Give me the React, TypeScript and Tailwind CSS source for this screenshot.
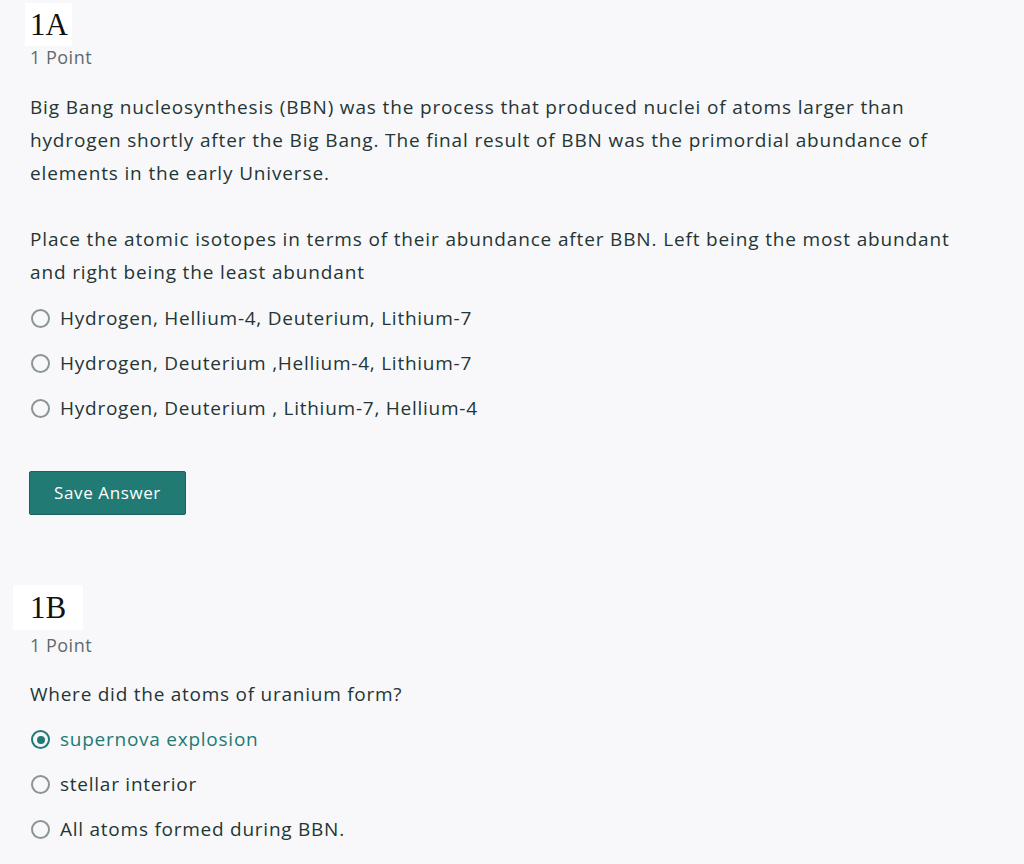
import React from 'react'

type Opt = { label: string; selected?: boolean }

function Radio({ label, selected }: Opt) {
    return (
        <div className="flex items-center h-[45px]">
            {selected ? (
                <span className="w-[19px] h-[19px] rounded-full border-[2.5px] border-[#217a74] flex items-center justify-center ml-[31px]">
                    <span className="w-[8px] h-[8px] rounded-full bg-[#217a74]" />
                </span>
            ) : (
                <span className="w-[19px] h-[19px] rounded-full border-[2.5px] border-[#8b9595] ml-[31px]" />
            )}
            <span className={`ml-[10px] text-[19px] tracking-[0.75px] ${selected ? 'text-[#217a74]' : 'text-[#243535]'}`}>{label}</span>
        </div>
    )
}

export default function App() {
    const q1: Opt[] = [
        { label: 'Hydrogen, Hellium-4, Deuterium, Lithium-7' },
        { label: 'Hydrogen, Deuterium ,Hellium-4, Lithium-7' },
        { label: 'Hydrogen, Deuterium , Lithium-7, Hellium-4' },
    ]
    const q2: Opt[] = [
        { label: 'supernova explosion', selected: true },
        { label: 'stellar interior' },
        { label: 'All atoms formed during BBN.' },
    ]

    return (
        <div className="w-[1024px] h-[864px] bg-[#f8f8fa] overflow-hidden font-['Open_Sans',sans-serif] text-[#243535]">
            <div className="pt-[3px]">
                <div className="ml-[25px] w-[47px] h-[43px] bg-white flex items-center pl-[5px] font-['Liberation_Serif',serif] text-[31px] text-[#111] leading-none">1A</div>
                <div className="ml-[30px] mt-[-2px] text-[18px] tracking-[0.5px] text-[#5f6b6d]">1 Point</div>
            </div>

            <div className="ml-[30px] mt-[20px] w-[925px] text-[19px] tracking-[0.85px] leading-[33px]">
                <p>Big Bang nucleosynthesis (BBN) was the process that produced nuclei of atoms larger than hydrogen shortly after the Big Bang. The final result of BBN was the primordial abundance of elements in the early Universe.</p>
                <p className="mt-[33px]">Place the atomic isotopes in terms of their abundance after BBN. Left being the most abundant and right being the least abundant</p>
            </div>

            <div className="mt-[7px]">
                {q1.map((o) => (
                    <Radio key={o.label} {...o} />
                ))}
            </div>

            <button className="ml-[29px] mt-[40px] w-[157px] h-[44px] bg-[#217a74] border border-[#1a625d] rounded-[2px] text-white text-[17px] tracking-[0.6px]">
                Save Answer
            </button>

            <div className="mt-[70px]">
                <div className="ml-[13px] w-[70px] h-[45px] bg-white flex items-center pl-[17px] font-['Liberation_Serif',serif] text-[31px] text-[#111] leading-none">1B</div>
                <div className="ml-[30px] mt-[2px] text-[18px] tracking-[0.5px] text-[#5f6b6d]">1 Point</div>
            </div>

            <p className="ml-[30px] mt-[19px] text-[19px] tracking-[0.75px] leading-[33px]">Where did the atoms of uranium form?</p>

            <div className="mt-[6px]">
                {q2.map((o) => (
                    <Radio key={o.label} {...o} />
                ))}
            </div>
        </div>
    )
}
